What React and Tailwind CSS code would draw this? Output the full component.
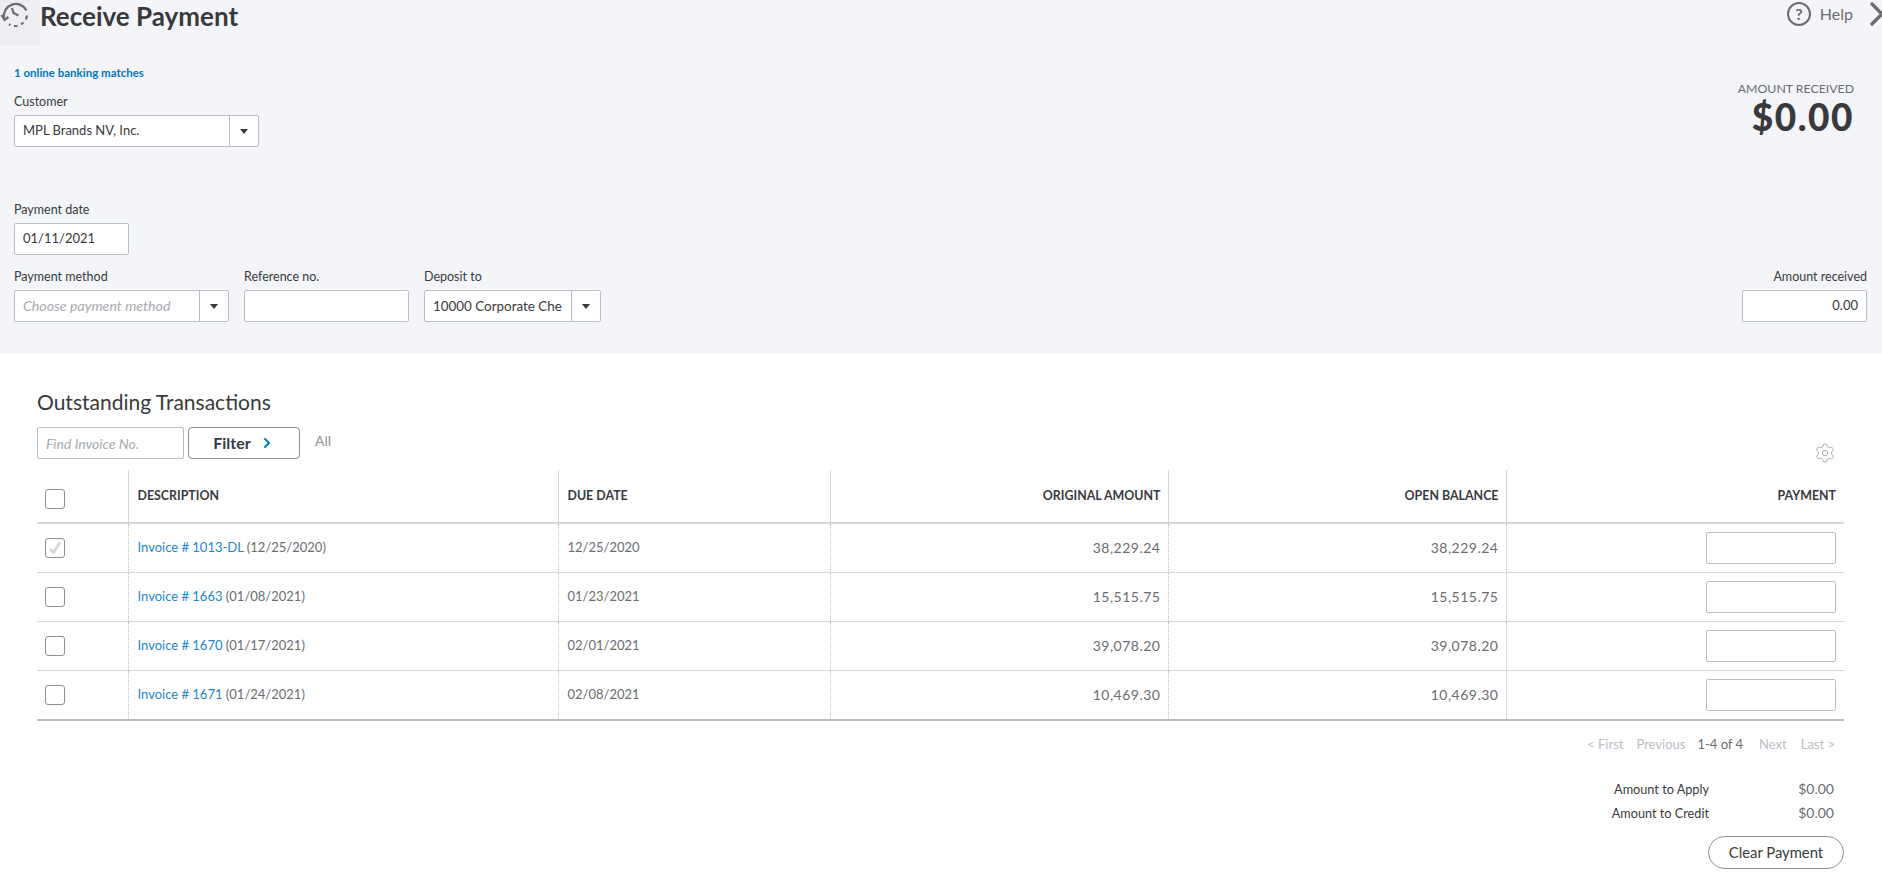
import React from 'react';
import { ChevronRight, Settings } from 'lucide-react';

const font = "font-['Lato','Open_Sans',sans-serif]";

const HistoryIcon = () => (
  <svg width="30" height="28" viewBox="0 0 30 28" fill="none" stroke="#6b6c72" strokeWidth="2.2">
    <path d="M4 18 A12 12 0 0 1 26.5 10.5" />
    <path d="M27 15.5 L26 19.5 M23.5 22.5 L21 24.5 M17.5 26 L14 26 M10.5 25 L9 24.3" />
    <path d="M1.5 15 L4.5 20 L8.5 17" />
    <path d="M12 8 L13.5 13 L18.5 15.5" />
  </svg>
);

const Caret = () => <span className="w-0 h-0 border-x-[4px] border-x-transparent border-t-[5px] border-t-[#393a3d]" />;

const Label = ({ children, className = '' }) => (
  <label className={`block text-[12.5px] leading-[18px] text-[#393a3d] ${className}`}>{children}</label>
);

const Box = ({ className = '', children }) => (
  <div className={`h-8 bg-white border border-[#babec5] rounded-[2px] flex items-center text-[13px] text-[#393a3d] ${className}`}>
    {children}
  </div>
);

const Select = ({ width, text, textClass = '' }) => (
  <Box className={width}>
    <span className={`flex-1 px-2 truncate ${textClass}`}>{text}</span>
    <span className="w-[29px] h-full border-l border-[#babec5] flex items-center justify-center">
      <Caret />
    </span>
  </Box>
);

const rows = [
  { link: 'Invoice # 1013-DL', date: '12/25/2020', due: '12/25/2020', amount: '38,229.24', checked: true },
  { link: 'Invoice # 1663', date: '01/08/2021', due: '01/23/2021', amount: '15,515.75' },
  { link: 'Invoice # 1670', date: '01/17/2021', due: '02/01/2021', amount: '39,078.20' },
  { link: 'Invoice # 1671', date: '01/24/2021', due: '02/08/2021', amount: '10,469.30' },
];

const CheckBox = ({ checked }) => (
  <span className="w-5 h-5 border border-[#8d9096] rounded-[3px] bg-white flex items-center justify-center">
    {checked && (
      <svg width="16" height="16" viewBox="0 0 16 16" fill="none" stroke="#d4d7dc" strokeWidth="3">
        <path d="M3 9 L6.5 12.5 L13 2.5" />
      </svg>
    )}
  </span>
);

export default function App() {
  return (
    <div className={`w-[1882px] h-[875px] overflow-hidden bg-white ${font} text-[#393a3d]`}>
      {/* top form */}
      <div className="bg-[#f4f5f8] h-[354px] flex flex-col">
        <div className="flex items-start">
          <div className="w-10 h-[46px] bg-[#eceef1] shrink-0">
            <HistoryIcon />
          </div>
          <h1 className="text-[26px] leading-8 font-bold flex-1">Receive Payment</h1>
          <div className="flex items-center h-7 text-base text-[#6b6c72] overflow-hidden">
            <span className="w-6 h-6 rounded-full border-2 border-[#6b6c72] flex items-center justify-center text-base font-bold">?</span>
            <span className="ml-[9px]">Help</span>
            <ChevronRight size={40} strokeWidth={2} className="ml-1 -mr-[15px] shrink-0 text-[#6b6c72]" />
          </div>
        </div>

        <div className="flex justify-between px-[14px] mt-[19px]">
          <div>
            <a className="block text-[11.5px] leading-4 font-bold text-[#0077c5]">1 online banking matches</a>
            <Label className="mt-[12px]">Customer</Label>
            <Select width="w-[245px] mt-[4px]" text="MPL Brands NV, Inc." />
          </div>
          <div className="text-right pr-[14px] pt-[15px]">
            <div className="text-[12.3px] leading-[18px] text-[#6b6c72]">AMOUNT RECEIVED</div>
            <div className="text-[37px] leading-[38px] tracking-[1.5px] font-black">$0.00</div>
          </div>
        </div>

        <div className="px-[14px] mt-[54px]">
          <Label>Payment date</Label>
          <Box className="w-[115px] px-2 mt-[4px] text-[12.2px]">01/11/2021</Box>
        </div>

        <div className="flex items-end px-[14px] mt-[13px]">
          <div>
            <Label>Payment method</Label>
            <div className="mt-[4px]">
              <Select width="w-[215px]" text="Choose payment method" textClass="italic text-[14.2px] text-[#a8abb0]" />
            </div>
          </div>
          <div className="ml-[15px]">
            <Label>Reference no.</Label>
            <Box className="w-[165px] mt-[4px]" />
          </div>
          <div className="ml-[15px]">
            <Label>Deposit to</Label>
            <div className="mt-[4px]">
              <Select width="w-[177px]" text="10000 Corporate Che" textClass="text-[13.4px]" />
            </div>
          </div>
          <div className="ml-auto pr-[1px]">
            <Label className="text-right">Amount received</Label>
            <Box className="w-[125px] mt-[4px] justify-end px-2">0.00</Box>
          </div>
        </div>
      </div>

      {/* outstanding transactions */}
      <div className="pl-[37px] w-[1844px]">
        <h2 className="mt-[35px] text-[21px] leading-[26px]">Outstanding Transactions</h2>
        <div className="flex items-start mt-[12px] h-[43px]">
          <Box className="w-[147px] px-2 italic text-[14px] text-[#a8abb0]">Find Invoice No.</Box>
          <button className="ml-1 w-[112px] h-8 border border-[#8d9096] rounded flex items-center justify-center text-base font-bold">
            Filter
            <ChevronRight size={16} strokeWidth={3} className="ml-2 text-[#0077c5]" />
          </button>
          <span className="ml-[15px] text-sm leading-7 text-[#8d9096]">All</span>
          <Settings size={22} strokeWidth={1} className="ml-auto mr-[8px] mt-[15px] text-[#a0a3a8]" />
        </div>

        <table className="w-full table-fixed border-collapse text-[13px]">
          <colgroup>
            <col className="w-[91px]" />
            <col className="w-[430px]" />
            <col className="w-[272px]" />
            <col className="w-[338px]" />
            <col className="w-[338px]" />
            <col className="w-[338px]" />
          </colgroup>
          <thead>
            <tr className="h-[53px] border-b-2 border-[#d4d7dc] text-[12.4px] font-bold">
              <th className="px-2 pt-[6px]"><CheckBox /></th>
              <th className="border-l border-[#d4d7dc] pl-[9px] pr-2 text-left">DESCRIPTION</th>
              <th className="border-l border-[#d4d7dc] pl-[9px] pr-2 text-left">DUE DATE</th>
              <th className="border-l border-[#d4d7dc] pl-2 pr-[7px] text-right">ORIGINAL AMOUNT</th>
              <th className="border-l border-[#d4d7dc] pl-2 pr-[7px] text-right">OPEN BALANCE</th>
              <th className="border-l border-[#d4d7dc] px-2 text-right">PAYMENT</th>
            </tr>
          </thead>
          <tbody>
            {rows.map((row, i) => (
              <tr key={i} className={i === 3 ? 'h-[50px] border-b-2 border-[#babec5]' : 'h-[49px] border-b border-[#d4d7dc]'}>
                <td className="px-2"><CheckBox checked={row.checked} /></td>
                <td className="border-l border-dotted border-[#babec5] pl-[9px] pr-2">
                  <a className="text-[#1f86cb]">{row.link}</a> <span className="text-[#6b6c72]">({row.date})</span>
                </td>
                <td className="border-l border-dotted border-[#babec5] pl-[9px] pr-2 text-[#6b6c72]">{row.due}</td>
                <td className="border-l border-dotted border-[#babec5] pl-2 pr-[7px] text-right text-[14px] tracking-[0.5px] text-[#6b6c72]">{row.amount}</td>
                <td className="border-l border-dotted border-[#babec5] pl-2 pr-[7px] text-right text-[14px] tracking-[0.5px] text-[#6b6c72]">{row.amount}</td>
                <td className="border-l border-dotted border-[#babec5] px-2"><Box className="w-[130px] ml-auto" /></td>
              </tr>
            ))}
          </tbody>
        </table>

        <div className="flex justify-end items-center mt-[15px] pr-[9px] text-[13px] leading-4 text-[#babec5]">
          <span>&lt; First</span>
          <span className="ml-[13px]">Previous</span>
          <span className="ml-3 text-[#6b6c72]">1-4 of 4</span>
          <span className="ml-4">Next</span>
          <span className="ml-[14px]">Last &gt;</span>
        </div>

        <div className="flex justify-end mt-[25px] pr-[10px] text-[12.7px] leading-[24px]">
          <div className="text-right text-[#393a3d]">
            <div>Amount to Apply</div>
            <div>Amount to Credit</div>
          </div>
          <div className="w-[125px] text-right text-[#6b6c72] text-[14px] leading-[24px]">
            <div>$0.00</div>
            <div>$0.00</div>
          </div>
        </div>

        <div className="flex justify-end mt-[11px]">
          <button className="w-[136px] h-[33px] border border-[#8d9096] rounded-full text-[14.8px]">Clear Payment</button>
        </div>
      </div>
    </div>
  );
}
